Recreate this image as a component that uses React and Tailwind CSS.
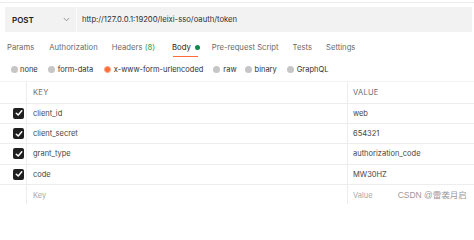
import React from "react";

const font = { fontFamily: "Inter, 'Noto Sans', sans-serif" };

function Check() {
  return (
    <div className="w-[11px] h-[11px] rounded-[2px] bg-[#1f1f1f] flex items-center justify-center">
      <svg width="8" height="8" viewBox="0 0 8 8">
        <path d="M1.3 4.2 L3.2 6 L6.8 1.8" stroke="#fff" strokeWidth="1.5" fill="none" strokeLinecap="round" strokeLinejoin="round" />
      </svg>
    </div>
  );
}

function Radio({ on }) {
  return on ? (
    <span className="w-[7px] h-[7px] rounded-full bg-[#ff6c37] border-[1.5px] border-[#f7a284] inline-block" />
  ) : (
    <span className="w-[7px] h-[7px] rounded-full bg-[#c6c6c6] inline-block" />
  );
}

const rows = [
  ["client_id", "web"],
  ["client_secret", "654321"],
  ["grant_type", "authorization_code"],
  ["code", "MW30HZ"],
];

export default function App() {
  return (
    <div className="w-[474px] h-[204px] bg-white overflow-hidden relative text-[#212121]" style={font}>
      <div className="h-[2px]" />
      <div className="h-px bg-[#ececec]" />
      <div className="h-[4px]" />
      <div className="mx-[5px] mr-[2px] h-[25px] bg-[#f2f2f2] flex items-center">
        <div className="w-[72px] h-full flex items-center justify-between pl-[7px] pr-[6px] border-r border-[#fafafa]">
          <span className="text-[8px] font-semibold text-[#212121]">POST</span>
          <svg width="7" height="5" viewBox="0 0 7 5">
            <path d="M0.8 1 L3.5 3.8 L6.2 1" stroke="#8a8a8a" strokeWidth="0.9" fill="none" />
          </svg>
        </div>
        <span className="ml-[5px] text-[7.7px] text-[#303030]">http://127.0.0.1:19200/leixi-sso/oauth/token</span>
      </div>
      <div className="h-[33px] flex items-start pt-[10px] pl-[7px] text-[7.7px] text-[#6b6b6b]">
        <span>Params</span>
        <span className="ml-[15px]">Authorization</span>
        <span className="ml-[14px]">Headers <span className="text-[#1f9c55]">(8)</span></span>
        <span className="ml-[17px] flex flex-col">
          <span className="flex items-center text-[#212121]">
            Body
            <span className="ml-[4px] w-[5px] h-[5px] rounded-full bg-[#0f8a4a] inline-block" />
          </span>
          <span className="mt-[2px] ml-px h-[1.5px] bg-[#ff6c37] w-[25px]" />
        </span>
        <span className="ml-[12px]">Pre-request Script</span>
        <span className="ml-[14px]">Tests</span>
        <span className="ml-[14px]">Settings</span>
      </div>
      <div className="h-[13px] flex items-center pl-[10.5px] text-[7.5px] text-[#303030] -mt-[2px]">
        <Radio />
        <span className="ml-[2.5px]">none</span>
        <span className="ml-[10px] flex"><Radio /></span>
        <span className="ml-[3px]">form-data</span>
        <span className="ml-[10.5px] flex"><Radio on /></span>
        <span className="ml-[3px]">x-www-form-urlencoded</span>
        <span className="ml-[10px] flex"><Radio /></span>
        <span className="ml-[3px]">raw</span>
        <span className="ml-[8px] flex"><Radio /></span>
        <span className="ml-[3px]">binary</span>
        <span className="ml-[10px] flex"><Radio /></span>
        <span className="ml-[3px]">GraphQL</span>
      </div>
      <div className="mt-[5px] border-t border-[#f3f3f3] text-[7.5px]">
        <div className="flex h-[21.5px] border-b border-[#ededed]">
          <div className="w-[27px] border-r border-[#ededed]" />
          <div className="w-[321px] border-r border-[#ededed] flex items-center pl-[6px] text-[#6b6b6b] tracking-[0.3px]">KEY</div>
          <div className="flex-1 flex items-center pl-[5px] text-[#6b6b6b] tracking-[0.3px]">VALUE</div>
        </div>
        {rows.map(([k, v]) => (
          <div key={k} className="flex h-[20.4px] border-b border-[#ededed] text-[7.5px] text-[#454545]">
            <div className="w-[27px] border-r border-[#ededed] flex items-center justify-end pr-[2px]">
              <Check />
            </div>
            <div className="w-[321px] border-r border-[#ededed] flex items-center pl-[6px]">{k}</div>
            <div className="flex-1 flex items-center pl-[5px]">{v}</div>
          </div>
        ))}
        <div className="flex h-[21px] text-[7.5px] text-[#a8a8a8]">
          <div className="w-[27px] border-r border-[#ededed]" />
          <div className="w-[321px] border-r border-[#ededed] flex items-center pl-[6px]">Key</div>
          <div className="flex-1 flex items-center pl-[5px]">
            <span>Value</span>
            <span className="ml-[25px] text-[8.5px] text-[#9a9a9a]" style={{ fontFamily: "'Liberation Sans', 'Noto Sans CJK SC', sans-serif" }}>CSDN @雷袭月启</span>
          </div>
        </div>
      </div>
    </div>
  );
}
